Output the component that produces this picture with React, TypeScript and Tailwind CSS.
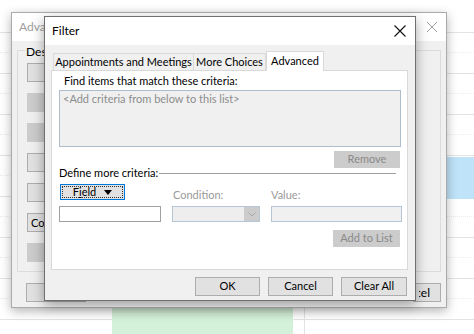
import React from 'react'

const font = { fontFamily: 'Lato, "Open Sans", sans-serif' }

function BackButton({ dark, label }: { dark?: boolean; label?: string }) {
  return (
    <div
      className={
        'h-[19px] w-[60px] border text-[11px] leading-[17px] pl-[3px] text-black overflow-hidden whitespace-nowrap ' +
        (dark ? 'bg-[#cccccc] border-[#cccccc]' : 'bg-[#e1e1e1] border-[#adadad]')
      }
    >
      {label}
    </div>
  )
}

function Btn({ children, w, h, disabled }: { children: React.ReactNode; w: string; h: string; disabled?: boolean }) {
  return (
    <div
      className={
        'flex items-center justify-center text-[11px] border ' +
        w +
        ' ' +
        h +
        (disabled ? ' bg-[#cccccc] border-[#cccccc] text-[#8a8a8a]' : ' bg-[#e1e1e1] border-[#adadad] text-black')
      }
    >
      {children}
    </div>
  )
}

export default function App() {
  const rows = [0, 1, 2, 3, 4, 5, 6, 7]
  return (
    <div className="relative w-[474px] h-[334px] overflow-hidden bg-white" style={font}>
      {/* calendar behind */}
      <div className="flex flex-col">
        <div className="h-[33px] border-b border-[#e3e3e3]" />
        {rows.map((r) => (
          <div key={r} className="h-[41px] flex flex-col border-b border-[#e3e3e3]">
            <div className="h-[20px] border-b border-dotted border-[#ececec]" />
          </div>
        ))}
      </div>
      <div className="absolute left-[447px] top-[157px] w-[27px] h-[42px] bg-[#bfe3f8]" />
      <div className="absolute left-[112px] top-[307px] w-[181px] h-[27px] bg-[#d3f0d8]" />
      <div className="absolute left-[304px] top-[300px] w-px h-[34px] bg-[#e3e3e3]" />

      {/* Advanced dialog (inactive) */}
      <div className="absolute left-[11px] top-[12px] w-[436px] h-[296px] flex flex-col bg-[#f0f0f0] border border-[#aaaaaa] shadow-[0_3px_10px_rgba(0,0,0,0.3)]">
        <div className="h-[28px] bg-white flex items-center justify-between pl-[7px] pr-[6px]">
          <span className="w-[30px] overflow-hidden whitespace-nowrap text-[12px] text-[#a0a0a0]">Advanced Find</span>
          <svg width="12" height="12" viewBox="0 0 12 12" className="mr-[2px]">
            <path d="M1 1L11 11M11 1L1 11" stroke="#a0a0a0" strokeWidth="1" />
          </svg>
        </div>
        <div className="flex-1 flex flex-col px-[5px] pt-[9px]">
          <div className="relative h-[222px] border border-[#dcdcdc] flex flex-col gap-[11px] pt-[12px] pl-[9px]">
            <span className="absolute left-[7px] top-[-8px] w-[24px] overflow-hidden whitespace-nowrap bg-[#f0f0f0] px-[1px] text-[12px] text-black">
              Description
            </span>
            <BackButton />
            <BackButton dark />
            <BackButton dark />
            <BackButton />
            <BackButton />
            <BackButton label="Co" />
            <BackButton dark />
          </div>
          <div className="flex justify-between pl-[9px] mt-[11px]">
            <BackButton />
            <div className="h-[19px] w-[28px] border bg-[#e1e1e1] border-[#adadad] flex justify-end overflow-hidden pr-[10px]">
              <span className="text-[12px] leading-[17px] whitespace-nowrap w-[11px] flex justify-end overflow-hidden">Cancel</span>
            </div>
          </div>
        </div>
      </div>

      {/* Filter dialog (active) */}
      <div className="absolute left-[44px] top-[16px] w-[372px] h-[285px] flex flex-col bg-[#f0f0f0] border border-[#6f6f6f] shadow-[0_4px_12px_rgba(0,0,0,0.35)]">
        <div className="h-[28px] bg-white flex items-center justify-between pl-[7px] pr-[9px]">
          <span className="text-[12px] text-black">Filter</span>
          <svg width="12" height="12" viewBox="0 0 12 12">
            <path d="M0.5 0.5L11.5 11.5M11.5 0.5L0.5 11.5" stroke="#111" strokeWidth="1.1" />
          </svg>
        </div>
        <div className="flex-1 flex flex-col pl-[6px] pr-[7px] pt-[6px]">
          {/* tabs */}
          <div className="flex items-end pl-[2px] h-[19px] relative z-10">
            <div className="w-[141px] h-[17px] border border-b-0 border-[#d9d9d9] bg-[#f0f0f0] text-[11px] leading-[16px] text-black text-center">
              Appointments and Meetings
            </div>
            <div className="w-[72px] h-[17px] border border-b-0 border-l-0 border-[#d9d9d9] bg-[#f0f0f0] text-[11px] leading-[16px] text-black text-center">
              More Choices
            </div>
            <div className="w-[58px] h-[20px] border border-b-0 border-[#d9d9d9] bg-white text-[11px] leading-[18px] text-black text-center mb-[-1px]">
              Advanced
            </div>
          </div>
          <div className="h-[200px] bg-white border border-[#d9d9d9] flex flex-col pl-[7px] pr-[6px]">
            <div className="h-[14px] mt-[3px] text-[11px] text-black pl-[5px] leading-[14px]">Find items that match these criteria:</div>
            <div className="h-[57px] mt-[2px] border border-[#aebdcc] bg-[#f0f0f0] text-[11px] text-[#8d8d8d] pl-[3px] leading-[14px] pt-[1px]">
              &lt;Add criteria from below to this list&gt;
            </div>
            <div className="flex justify-end mt-[4px] pr-[1px]">
              <Btn w="w-[66px]" h="h-[17px]" disabled>
                Remove
              </Btn>
            </div>
            <div className="flex items-center h-[10px] mt-[0px]">
              <span className="text-[11px] text-black leading-[10px] pr-[1px]">Define more criteria:</span>
              <div className="flex-1 h-px bg-[#a0a0a0] mr-[5px] mt-[1px]" />
            </div>
            <div className="grid grid-cols-[102px_88px_131px] grid-rows-[16px_16px] gap-x-[11px] gap-y-[6px] mt-[6px]">
              <div className="ml-[1px] w-[65px] h-[16px] border border-[#0078d7] bg-[#e1e1e1] p-[1px]">
                <div className="h-full border border-dotted border-[#333] flex items-center justify-center gap-[8px] text-[11px] leading-[12px] text-black">
                  <span>
                    F<span className="underline">i</span>eld
                  </span>
                  <svg width="8" height="5" viewBox="0 0 8 5">
                    <path d="M0 0H8L4 5Z" fill="#000" />
                  </svg>
                </div>
              </div>
              <div className="flex items-end">
                <span className="text-[11px] text-[#9a9a9a] leading-[12px] pl-[1px] mb-[-1px]">Condition:</span>
              </div>
              <div className="flex items-end">
                <span className="text-[11px] text-[#9a9a9a] leading-[12px] mb-[-1px]">Value:</span>
              </div>
              <div className="h-[16px] border border-[#a0a0a0] bg-white" />
              <div className="h-[16px] border border-[#b5c6d6] bg-[#eeeeee] flex justify-end">
                <div className="w-[15px] h-full bg-[#cccccc] flex items-center justify-center">
                  <svg width="8" height="5" viewBox="0 0 8 5">
                    <path d="M0.5 0.5L4 4L7.5 0.5" stroke="#a8a8a8" fill="none" />
                  </svg>
                </div>
              </div>
              <div className="h-[16px] border border-[#b5c6d6] bg-[#f0f0f0]" />
            </div>
            <div className="flex justify-end mt-[8px] pr-[1px]">
              <Btn w="w-[67px]" h="h-[17px]" disabled>
                Add to List
              </Btn>
            </div>
          </div>
          <div className="flex justify-end gap-[8px] mt-[7px] pr-[1px]">
            <Btn w="w-[65px]" h="h-[19px]">OK</Btn>
            <Btn w="w-[65px]" h="h-[19px]">Cancel</Btn>
            <Btn w="w-[66px]" h="h-[19px]">Clear All</Btn>
          </div>
        </div>
      </div>
    </div>
  )
}
